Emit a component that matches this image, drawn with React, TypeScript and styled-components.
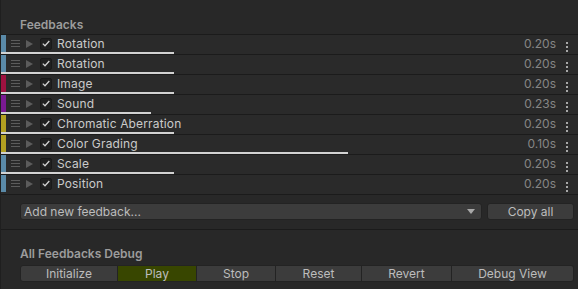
import { FC } from 'react'
import styled, { createGlobalStyle } from 'styled-components'

/*
 * Types
 */

type Feedback = {
    label: string
    color: string
    duration: string
    progress: number
}

type FeedbackRowProps = {
    item: Feedback
}

/*
 * Data
 */

const BLUE = '#5a8aa8'
const RED = '#9e1240'
const PURPLE = '#7a1a92'
const YELLOW = '#b3a021'

const feedbacks: Feedback[] = [
    { label: 'Rotation', color: BLUE, duration: '0.20s', progress: 173 },
    { label: 'Rotation', color: BLUE, duration: '0.20s', progress: 173 },
    { label: 'Image', color: RED, duration: '0.20s', progress: 173 },
    { label: 'Sound', color: PURPLE, duration: '0.23s', progress: 150 },
    { label: 'Chromatic Aberration', color: YELLOW, duration: '0.20s', progress: 173 },
    { label: 'Color Grading', color: YELLOW, duration: '0.10s', progress: 347 },
    { label: 'Scale', color: BLUE, duration: '0.20s', progress: 173 },
    { label: 'Position', color: BLUE, duration: '0.20s', progress: 0 },
]

const debugButtons = [
    { label: 'Initialize', width: 98 },
    { label: 'Play', width: 79, active: true },
    { label: 'Stop', width: 79 },
    { label: 'Reset', width: 86 },
    { label: 'Revert', width: 90 },
    { label: 'Debug View', width: 122 },
]

/*
 * Styles
 */

const GlobalStyle = createGlobalStyle`
    html, body {
        margin: 0;
        padding: 0;
        background: #282828;
    }
    * {
        box-sizing: border-box;
    }
`

const Panel = styled.div`
    width: 578px;
    height: 289px;
    overflow: hidden;
    background: #282828;
    border-left: 1px solid #1f1f1f;
    font-family: Inter, 'Noto Sans', sans-serif;
    font-size: 12px;
    color: #c4c4c4;
    display: flex;
    flex-direction: column;
`

const SectionTitle = styled.div`
    height: 34px;
    padding: 18px 0 0 19px;
    line-height: 14px;
    font-weight: 600;
    color: #9c9c9c;
`

const List = styled.div`
    display: flex;
    flex-direction: column;
    border-bottom: 1px solid #1b1b1b;
`

const Row = styled.div`
    height: 20px;
    border-top: 1px solid #1b1b1b;
    background: #2a2a2a;
    display: flex;
    flex-direction: column;
`

const RowMain = styled.div`
    height: 17px;
    display: flex;
    align-items: center;
`

const Strip = styled.div<{ $color: string }>`
    width: 5px;
    height: 17px;
    background: ${(p) => p.$color};
`

const Handle = styled.div`
    margin-left: 5px;
    width: 9px;
    height: 7px;
    display: flex;
    flex-direction: column;
    justify-content: space-between;

    span {
        height: 1px;
        background: #5c5c5c;
    }
`

const Foldout = styled.div`
    margin-left: 6px;
    width: 0;
    height: 0;
    border-top: 4px solid transparent;
    border-bottom: 4px solid transparent;
    border-left: 7px solid #5c5c5c;
`

const Checkbox = styled.div`
    margin-left: 7px;
    width: 12px;
    height: 12px;
    border: 1px solid #191919;
    border-radius: 2px;
    background: #202020;
    display: flex;
    align-items: center;
    justify-content: center;
`

const Label = styled.div`
    margin-left: 5px;
    flex: 1;
    line-height: 14px;
    color: #cacaca;
    letter-spacing: 0.15px;
    white-space: nowrap;
`

const Duration = styled.div`
    color: #868686;
    line-height: 14px;
    margin-right: 10px;
`

const Kebab = styled.div`
    width: 2px;
    margin-right: 10px;
    margin-top: 6px;
    display: flex;
    flex-direction: column;
    gap: 2px;

    span {
        width: 2px;
        height: 2px;
        background: #a8a8a8;
    }
`

const ProgressTrack = styled.div`
    height: 2px;
`

const ProgressFill = styled.div`
    height: 2px;
    background: #d2d2d2;
`

const AddRow = styled.div`
    margin-top: 8px;
    padding: 0 4px 0 19px;
    display: flex;
    gap: 5px;
    height: 17px;
`

const Dropdown = styled.div`
    flex: 1;
    background: #3c3c3c;
    border: 1px solid #232323;
    border-radius: 3px;
    display: flex;
    align-items: center;
    padding: 0 6px 0 3px;
    color: #bdbdbd;
`

const DropdownText = styled.span`
    flex: 1;
`

const Arrow = styled.div`
    width: 0;
    height: 0;
    border-left: 4px solid transparent;
    border-right: 4px solid transparent;
    border-top: 5px solid #a8a8a8;
`

const Button = styled.div`
    width: 87px;
    background: #3c3c3c;
    border: 1px solid #232323;
    border-radius: 3px;
    display: flex;
    align-items: center;
    justify-content: center;
    color: #bdbdbd;
`

const Separator = styled.div`
    margin-top: 9px;
    height: 1px;
    background: #1b1b1b;
`

const DebugTitle = styled(SectionTitle)`
    height: auto;
    padding-top: 17px;
`

const ButtonBar = styled.div`
    margin: 4px 4px 0 19px;
    display: flex;
    height: 17px;
`

const DebugButton = styled.div<{ $active?: boolean }>`
    background: ${(p) => (p.$active ? '#384600' : '#3c3c3c')};
    border: 1px solid #232323;
    border-left-width: 0;
    display: flex;
    align-items: center;
    justify-content: center;
    color: #bdbdbd;

    &:first-child {
        border-left-width: 1px;
        border-radius: 3px 0 0 3px;
    }

    &:last-child {
        border-radius: 0 3px 3px 0;
    }
`

/*
 * Components
 */

const CheckIcon = () => (
    <svg width="8" height="7" viewBox="0 0 8 7">
        <path d="M0.8 3.6 L3 5.8 L7.3 1" fill="none" stroke="#d0d0d0" strokeWidth="1.3" />
    </svg>
)

const FeedbackRow = ({ item }: FeedbackRowProps) => (
    <Row>
        <RowMain>
            <Strip $color={item.color} />
            <Handle>
                <span />
                <span />
                <span />
            </Handle>
            <Foldout />
            <Checkbox>
                <CheckIcon />
            </Checkbox>
            <Label>{item.label}</Label>
            <Duration>{item.duration}</Duration>
            <Kebab>
                <span />
                <span />
                <span />
            </Kebab>
        </RowMain>
        <ProgressTrack>
            {item.progress > 0 && <ProgressFill style={{ width: item.progress }} />}
        </ProgressTrack>
    </Row>
)

const App: FC = () => {
    return (
        <Panel>
            <GlobalStyle />
            <SectionTitle>Feedbacks</SectionTitle>
            <List>
                {feedbacks.map((item, index) => (
                    <FeedbackRow item={item} key={index} />
                ))}
            </List>
            <AddRow>
                <Dropdown>
                    <DropdownText>Add new feedback...</DropdownText>
                    <Arrow />
                </Dropdown>
                <Button>Copy all</Button>
            </AddRow>
            <Separator />
            <DebugTitle>All Feedbacks Debug</DebugTitle>
            <ButtonBar>
                {debugButtons.map((b) => (
                    <DebugButton key={b.label} $active={b.active} style={{ width: b.width }}>
                        {b.label}
                    </DebugButton>
                ))}
            </ButtonBar>
        </Panel>
    )
}

export default App
